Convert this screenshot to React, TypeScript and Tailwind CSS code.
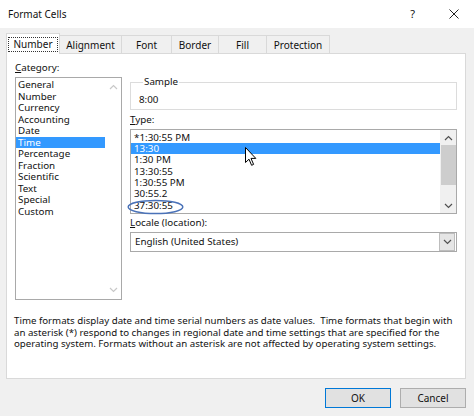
import React from "react";

const Chevron = ({ up, color = "#606060" }: { up?: boolean; color?: string }) => (
  <svg width="9" height="6" viewBox="0 0 9 6">
    <path
      d={up ? "M1 5 L4.5 1.5 L8 5" : "M1 1 L4.5 4.5 L8 1"}
      fill="none"
      stroke={color}
      strokeWidth="1.2"
    />
  </svg>
);

const categories = [
  "General",
  "Number",
  "Currency",
  "Accounting",
  "Date",
  "Time",
  "Percentage",
  "Fraction",
  "Scientific",
  "Text",
  "Special",
  "Custom",
];

const types = ["*1:30:55 PM", "13:30", "1:30 PM", "13:30:55", "1:30:55 PM", "30:55.2", "37:30:55"];

const tabs = [
  { label: "Alignment", w: "w-[62px]" },
  { label: "Font", w: "w-[50px]" },
  { label: "Border", w: "w-[47px]" },
  { label: "Fill", w: "w-[48px]" },
  { label: "Protection", w: "w-[63px]" },
];

export default function App() {
  return (
    <div className="relative w-[474px] h-[416px] bg-[#f0f0f0] flex flex-col overflow-hidden text-[9.8px] leading-[12px] text-[#111] font-['Noto_Sans',sans-serif]">
      {/* Title bar */}
      <div className="h-[28px] bg-white flex items-center pl-[8px] shrink-0">
        <span className="text-[10px]">Format Cells</span>
        <span className="ml-auto text-[11px] mr-[34px]">?</span>
        <svg width="10" height="10" viewBox="0 0 10 10" className="mr-[15px]">
          <path d="M0.5 0.5 L9.5 9.5 M9.5 0.5 L0.5 9.5" stroke="#222" strokeWidth="1" />
        </svg>
      </div>

      {/* Tabs */}
      <div className="h-[25px] flex items-end pl-[6px] shrink-0">
        <div className="relative z-10 w-[54px] h-[21px] -mb-px bg-white border border-b-0 border-[#d9d9d9] flex items-center justify-center">
          <span className="border border-dotted border-[#333] px-[4px] leading-[13px] text-[10px]">Number</span>
        </div>
        {tabs.map((t) => (
          <div
            key={t.label}
            className={`${t.w} h-[18px] border-t border-r border-[#d9d9d9] flex items-center justify-center text-[10px]`}
          >
            {t.label}
          </div>
        ))}
      </div>

      {/* Panel */}
      <div className="mx-[6px] w-[460px] h-[326px] bg-white border border-[#d9d9d9] shrink-0 flex flex-col px-[8px]">
        <div className="flex gap-[8px]">
          {/* Left column */}
          <div className="pt-[8px] w-[108px]">
            <div className="h-[12px] leading-[12px]">
              <span className="underline underline-offset-1">C</span>ategory:
            </div>
            <div className="mt-[3px] h-[223px] border border-[#a9a9a9] flex">
              <div className="flex-1 pt-[1px]">
                {categories.map((c) => (
                  <div
                    key={c}
                    className={`h-[11.5px] leading-[11.5px] pl-[2px] ${
                      c === "Time" ? "bg-[#3399ff] text-white" : ""
                    }`}
                  >
                    {c}
                  </div>
                ))}
              </div>
              <div className="w-[16px] flex flex-col items-center justify-between py-[6px]">
                <Chevron up color="#c8c8c8" />
                <Chevron color="#c8c8c8" />
              </div>
            </div>
          </div>

          {/* Right column */}
          <div className="w-[329px] pt-[22px]">
            <fieldset className="w-[327px] h-[34px] border border-[#dcdcdc] pl-[8px]">
              <legend className="ml-[4px] px-[1px] leading-[12px]">Sample</legend>
              <div className="pt-[6px] leading-[12px]">8:00</div>
            </fieldset>
            <div className="mt-[4px] h-[12px] leading-[12px]">
              <span className="underline underline-offset-1">T</span>ype:
            </div>
            <div className="mt-[3px] h-[85px] border border-[#a9a9a9] flex">
              <div className="flex-1 pt-[1.5px]">
                {types.map((t) => (
                  <div
                    key={t}
                    className={`h-[11.4px] leading-[11.4px] pl-[3px] ${
                      t === "13:30" ? "bg-[#3399ff] text-white" : ""
                    }`}
                  >
                    {t}
                  </div>
                ))}
              </div>
              <div className="w-[16px] bg-[#f0f0f0] flex flex-col items-center">
                <div className="h-[15px] flex items-center justify-center">
                  <Chevron up color="#505050" />
                </div>
                <div className="w-[15px] h-[40px] bg-[#cdcdcd]" />
                <div className="mt-auto h-[15px] flex items-center justify-center">
                  <Chevron color="#505050" />
                </div>
              </div>
            </div>
            <div className="mt-[3px] h-[12px] leading-[12px]">
              <span className="underline underline-offset-1">L</span>ocale (location):
            </div>
            <div className="mt-[3px] h-[20px] border border-[#a9a9a9] flex items-center">
              <div className="flex-1 pl-[4px]">English (United States)</div>
              <div className="w-[16px] h-[18px] bg-[#e5e5e5] border border-[#bdbdbd] flex items-center justify-center mr-[1px]">
                <Chevron color="#505050" />
              </div>
            </div>
          </div>
        </div>

        {/* Description */}
        <div className="mt-[15px] leading-[11.5px] text-[9.7px] -ml-px whitespace-pre">
          <div>Time formats display date and time serial numbers as date values.  Time formats that begin with</div>
          <div>an asterisk (*) respond to changes in regional date and time settings that are specified for the</div>
          <div>operating system. Formats without an asterisk are not affected by operating system settings.</div>
        </div>
      </div>

      {/* Buttons */}
      <div className="flex justify-end gap-[9px] pr-[8px] mt-[9px]">
        <button className="w-[66px] h-[20px] bg-[#e1e1e1] border border-[#0078d7] text-[10px] leading-[18px] text-center">
          OK
        </button>
        <button className="w-[66px] h-[20px] bg-[#e1e1e1] border border-[#adadad] text-[10px] leading-[18px] text-center">
          Cancel
        </button>
      </div>

      {/* Ellipse annotation */}
      <svg className="absolute left-[127px] top-[199px]" width="57" height="16" viewBox="0 0 57 16">
        <ellipse cx="28.5" cy="8" rx="27.3" ry="6.6" fill="none" stroke="#4a72b8" strokeWidth="1.5" />
      </svg>

      {/* Mouse cursor */}
      <svg className="absolute left-[245px] top-[147px]" width="13" height="20" viewBox="0 0 13 20">
        <path
          d="M0.5 0.5 L0.5 15.5 L4 12.2 L6.6 18.3 L8.6 17.4 L6 11.4 L10.8 11.4 Z"
          fill="#fff"
          stroke="#000"
          strokeWidth="1"
          strokeLinejoin="round"
        />
      </svg>
    </div>
  );
}
